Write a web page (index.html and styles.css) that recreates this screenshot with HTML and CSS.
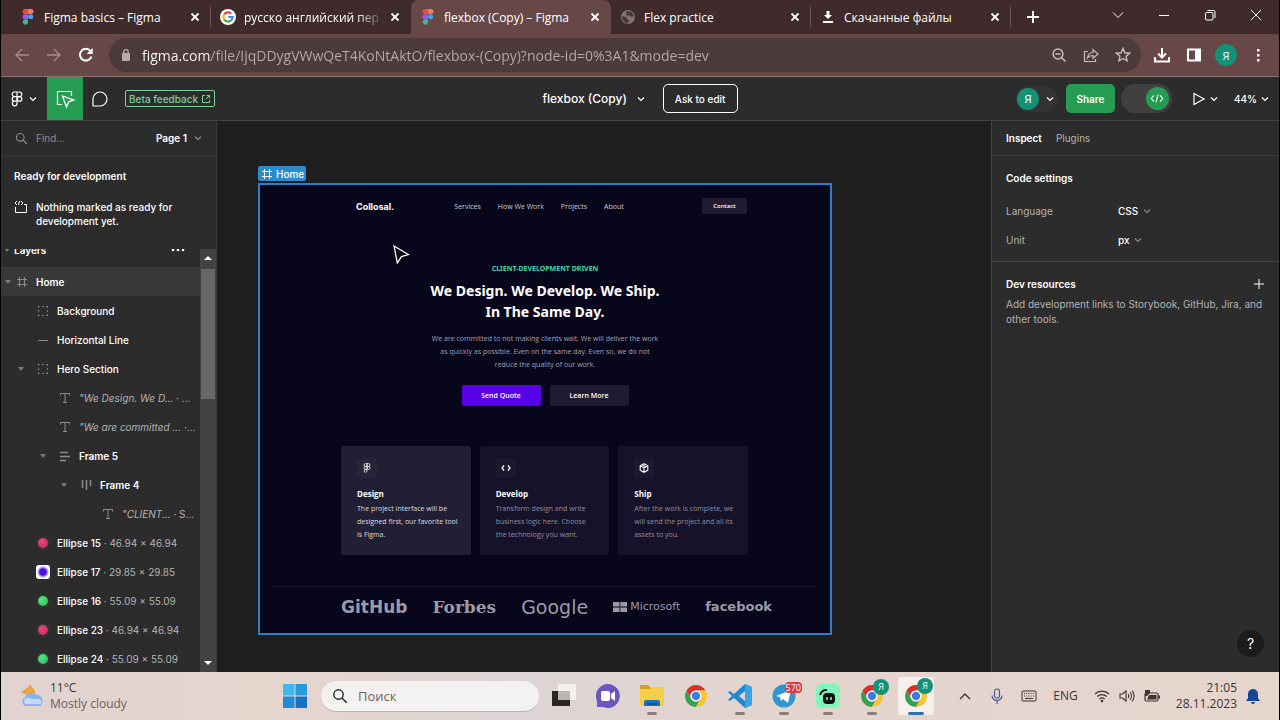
FILE: index.html
```html
<!DOCTYPE html>
<html lang="en">
<head>
    <meta charset="UTF-8">
    <meta name="viewport" content="width=device-width, initial-scale=1.0">
    <title>flexbox (Copy) – Figma</title>
    <link rel="stylesheet" href="styles.css">
</head>
<body>
    <svg class="sprite" aria-hidden="true">
        <symbol id="figma-color" viewBox="0 0 12 16">
            <path d="M3 0h3v5H3a2.5 2.5 0 0 1 0-5z" fill="#e8502e"/>
            <path d="M6 0h3a2.5 2.5 0 0 1 0 5H6z" fill="#f4776a"/>
            <path d="M3 5.2h3v5H3a2.5 2.5 0 0 1 0-5z" fill="#9a5be0"/>
            <circle cx="8.700" cy="7.700" r="2.500" fill="#3fa9e8"/>
            <path d="M3 10.500h3V13a2.600 2.600 0 1 1-3-2.500z" fill="#2fc48d"/>
        </symbol>
        <symbol id="figma-line" viewBox="0 0 12 16">
            <path d="M6 1H3.500a2.300 2.300 0 0 0 0 4.600H6zM6 1h2.500a2.300 2.300 0 0 1 0 4.600H6zM6 5.600H3.500a2.300 2.300 0 0 0 0 4.600H6zM3.500 10.200A2.300 2.300 0 1 0 6 12.500v-2.300z" fill="none" stroke="currentColor" stroke-width="1.200"/>
            <circle cx="8.500" cy="7.900" r="2.300" fill="none" stroke="currentColor" stroke-width="1.200"/>
        </symbol>
        <symbol id="close" viewBox="0 0 10 10"><path d="M1.500 1.500l7 7M8.500 1.500l-7 7" stroke="currentColor" stroke-width="1.800"/></symbol>
        <symbol id="chevron" viewBox="0 0 8 8"><path d="M1 2.500l3 3 3-3" fill="none" stroke="currentColor" stroke-width="1.200"/></symbol>
        <symbol id="caret" viewBox="0 0 6 6"><path d="M0 1h6L3 5z" fill="currentColor"/></symbol>
        <symbol id="download" viewBox="0 0 16 16"><path d="M6.500 2h3v4H12l-4 4-4-4h2.500zM3 12h10v2H3z" fill="currentColor"/></symbol>
        <symbol id="frame" viewBox="0 0 12 12"><path d="M3.500 1v10M8.500 1v10M1 3.500h10M1 8.500h10" stroke="currentColor"/></symbol>
        <symbol id="group" viewBox="0 0 12 12"><path d="M1 1.500h10M1 10.500h10M1.500 1v10M10.500 1v10" fill="none" stroke="currentColor" stroke-dasharray="1.600 2.600"/></symbol>
        <symbol id="line" viewBox="0 0 12 12"><path d="M1 6.500h10" stroke="currentColor"/></symbol>
        <symbol id="text" viewBox="0 0 12 12"><path d="M1.500 3.500v-2h9v2M6 1.500v9M4 10.500h4" fill="none" stroke="currentColor"/></symbol>
        <symbol id="align-left" viewBox="0 0 12 12"><path d="M1 2.500h8M1 6.500h10M1 10.500h6" stroke="currentColor" stroke-width="1.500"/></symbol>
        <symbol id="align-top" viewBox="0 0 12 12"><path d="M2.500 1v8M6.500 1v10M10.500 1v6" stroke="currentColor" stroke-width="1.500"/></symbol>
        <symbol id="search" viewBox="0 0 16 16"><circle cx="6.500" cy="6.500" r="4.700" fill="none" stroke="currentColor" stroke-width="1.400"/><path d="M10 10l4.700 4.700" stroke="currentColor" stroke-width="1.600"/></symbol>
        <symbol id="code" viewBox="0 0 16 12"><path d="M5 2L1.500 6 5 10M11 2l3.500 4L11 10" fill="none" stroke="currentColor" stroke-width="2"/></symbol>
        <symbol id="chrome" viewBox="0 0 24 24">
            <path d="M2.500 6.500A11 11 0 0 1 21.500 6.500H12A5.500 5.500 0 0 0 7.200 14.750z" fill="#d3322e"/>
            <path d="M2.500 6.500A11 11 0 0 0 12 23l4.800-8.250a5.500 5.500 0 0 1-9.600 0z" fill="#35a04d"/>
            <path d="M21.500 6.500A11 11 0 0 1 12 23l4.800-8.250A5.500 5.500 0 0 0 12 6.500z" fill="#f4c52c"/>
            <circle cx="12" cy="12" r="5.500" fill="#fff"/>
            <circle cx="12" cy="12" r="4.200" fill="#3c7de0"/>
        </symbol>
    </svg>

    <header class="browser">
        <div class="tabs">
            <div class="tab">
                <svg class="favicon"><use href="#figma-color"/></svg>
                <span class="tab-title">Figma basics – Figma</span>
                <button class="tab-close" aria-label="Close tab"><svg><use href="#close"/></svg></button>
            </div>
            <div class="tab">
                <svg class="favicon" viewBox="0 0 16 16">
                    <circle cx="8" cy="8" r="8" fill="#fff"/>
                    <g fill="none" stroke-width="2.200">
                        <path d="M4.200 5.500A4.600 4.600 0 0 1 11.200 4.600" stroke="#e04a3a"/>
                        <path d="M4.200 10.500a4.600 4.600 0 0 1 0-5" stroke="#f2b928"/>
                        <path d="M11 11.500a4.600 4.600 0 0 1-6.800-1" stroke="#34a853"/>
                        <path d="M8.200 8h4.400a4.600 4.600 0 0 1-1.600 3.500" stroke="#4285f4"/>
                    </g>
                </svg>
                <span class="tab-title fade">русско английский пер</span>
                <button class="tab-close" aria-label="Close tab"><svg><use href="#close"/></svg></button>
            </div>
            <div class="tab active">
                <svg class="favicon"><use href="#figma-color"/></svg>
                <span class="tab-title">flexbox (Copy) – Figma</span>
                <button class="tab-close" aria-label="Close tab"><svg><use href="#close"/></svg></button>
            </div>
            <div class="tab divided">
                <svg class="favicon" viewBox="0 0 16 16"><circle cx="8" cy="8" r="7" fill="#7c7474"/><path d="M2 7l4 1 1 2 2 1-1 3.500A7 7 0 0 1 2 7zM7 2l5 1 2 4-3 1-2-2-2 1-1-2z" fill="#4a3838"/></svg>
                <span class="tab-title">Flex practice</span>
                <button class="tab-close" aria-label="Close tab"><svg><use href="#close"/></svg></button>
            </div>
            <div class="tab divided">
                <svg class="favicon"><use href="#download"/></svg>
                <span class="tab-title">Скачанные файлы</span>
                <button class="tab-close" aria-label="Close tab"><svg><use href="#close"/></svg></button>
            </div>
            <button class="new-tab" aria-label="New tab"><svg viewBox="0 0 14 14"><path d="M7 1v12M1 7h12" stroke="currentColor" stroke-width="2"/></svg></button>
            <div class="window-buttons">
                <button aria-label="Search tabs"><svg viewBox="0 0 12 12"><path d="M1 3.500l5 5 5-5" fill="none" stroke="currentColor"/></svg></button>
                <button aria-label="Minimize"><svg viewBox="0 0 12 12"><path d="M1 6.500h10" stroke="currentColor"/></svg></button>
                <button aria-label="Restore"><svg viewBox="0 0 12 12"><path d="M3.500 1.500h6a1.500 1.500 0 0 1 1.500 1.500v6" fill="none" stroke="currentColor"/><rect x="1.500" y="3.500" width="7.500" height="7.500" rx="1" fill="none" stroke="currentColor"/></svg></button>
                <button aria-label="Close window"><svg viewBox="0 0 12 12"><path d="M1 1l10 10M11 1L1 11" stroke="currentColor"/></svg></button>
            </div>
        </div>
        <div class="address-bar">
            <button class="nav-btn dim" aria-label="Back"><svg viewBox="0 0 16 16"><path d="M15 8H2M8 2L2 8l6 6" fill="none" stroke="currentColor" stroke-width="1.400"/></svg></button>
            <button class="nav-btn dim" aria-label="Forward"><svg viewBox="0 0 16 16"><path d="M1 8h13M8 2l6 6-6 6" fill="none" stroke="currentColor" stroke-width="1.400"/></svg></button>
            <button class="nav-btn" aria-label="Reload"><svg viewBox="0 0 16 16"><path d="M13.500 9.500A5.900 5.900 0 1 1 12.500 4" fill="none" stroke="currentColor" stroke-width="2"/><path d="M14.700 1v6h-6z" fill="currentColor"/></svg></button>
            <div class="omnibox">
                <svg class="lock" viewBox="0 0 10 14"><rect x="1" y="5" width="8" height="8" rx="1" fill="currentColor"/><path d="M2.800 6V3.800a2.200 2.200 0 0 1 4.400 0V6" fill="none" stroke="currentColor" stroke-width="1.300"/></svg>
                <input class="url" type="text" aria-label="Address" value="figma.com/file/IjqDDygVWwQeT4KoNtAktO/flexbox-(Copy)?node-id=0%3A1&amp;mode=dev">
                <button class="nav-btn soft" aria-label="Zoom"><svg viewBox="0 0 16 16"><circle cx="7" cy="7" r="4.900" fill="none" stroke="currentColor" stroke-width="1.500"/><path d="M10.500 10.500l4 4M4.500 7h5" stroke="currentColor" stroke-width="1.500"/></svg></button>
                <button class="nav-btn soft" aria-label="Share page"><svg viewBox="0 0 16 16"><path d="M5 4.500H1.500v10h11V12M4.500 11c.5-4 2.500-5.500 5.500-5.500V2.500L15 7l-5 4.200V8.500c-2.500 0-4 .5-5.500 2.500z" fill="none" stroke="currentColor" stroke-width="1.200"/></svg></button>
                <button class="nav-btn soft" aria-label="Bookmark"><svg viewBox="0 0 16 16"><path d="M8 1.500l1.900 4.300 4.700.4-3.500 3.100 1 4.600L8 11.500l-4.100 2.400 1-4.600L1.400 6.200l4.700-.4z" fill="none" stroke="currentColor" stroke-width="1.400"/></svg></button>
            </div>
            <button class="nav-btn" aria-label="Downloads"><svg viewBox="0 0 16 16"><path d="M8 1v9M4 6.500l4 4 4-4M1 10v4.500h14V10" fill="none" stroke="currentColor" stroke-width="2"/></svg></button>
            <button class="nav-btn" aria-label="Side panel"><svg viewBox="0 0 16 16"><path d="M1 1.500h14v13H1zM3 3.500v9h6v-9z" fill="currentColor" fill-rule="evenodd"/></svg></button>
            <button class="nav-btn" aria-label="Profile"><span class="avatar">Я</span></button>
            <button class="nav-btn" aria-label="Menu"><svg viewBox="0 0 16 16"><path d="M7 2h2.500v2.500H7zM7 7h2.500v2.500H7zM7 12h2.500v2.500H7z" fill="currentColor"/></svg></button>
        </div>
    </header>

    <div class="toolbar">
        <div class="toolbar-left">
            <button class="tool main-menu" aria-label="Main menu"><svg class="logo"><use href="#figma-line"/></svg><svg class="chevron"><use href="#chevron"/></svg></button>
            <button class="tool inspect-tool" aria-label="Inspect"><svg viewBox="0 0 20 20"><path d="M7 15.500H2.500v-13h14V7" fill="none" stroke="currentColor" stroke-width="1.200"/><path d="M7.500 7l11 4-4.800 1.800L11.500 18z" fill="none" stroke="currentColor" stroke-width="1.300"/></svg></button>
            <button class="tool comment-tool" aria-label="Comment"><svg viewBox="0 0 18 18"><path d="M2 16V9a7 7 0 1 1 7 7z" fill="none" stroke="currentColor" stroke-width="1.200"/></svg></button>
            <a class="beta" href="#">Beta feedback <svg viewBox="0 0 10 10"><path d="M4 1.500H1.500v7h7V6M5.500 1.500h3v3M8.500 1.500L4.500 5.500" fill="none" stroke="currentColor"/></svg></a>
        </div>
        <div class="toolbar-title">
            <button class="file-name">flexbox (Copy) <svg class="chevron"><use href="#chevron"/></svg></button>
            <button class="ask">Ask to edit</button>
        </div>
        <div class="toolbar-right">
            <button class="user"><span class="avatar">Я</span><svg class="chevron"><use href="#chevron"/></svg></button>
            <button class="share">Share</button>
            <label class="dev-mode">
                <input type="checkbox" aria-label="Dev Mode" checked>
                <span class="knob"><svg viewBox="0 0 16 12"><path d="M4.500 2.500L1.500 6l3 3.500M11.500 2.500l3 3.500-3 3.500M9.300 1.500l-2.600 9" fill="none" stroke="currentColor" stroke-width="1.200"/></svg></span>
            </label>
            <button class="play" aria-label="Present"><svg viewBox="0 0 14 14"><path d="M2 1.500L12 7 2 12.500z" fill="none" stroke="currentColor" stroke-width="1.200"/></svg><svg class="chevron"><use href="#chevron"/></svg></button>
            <button class="zoom">44% <svg class="chevron"><use href="#chevron"/></svg></button>
        </div>
    </div>

    <main class="workspace">
        <aside class="layers-panel">
            <div class="find-row">
                <svg><use href="#search"/></svg>
                <input type="search" aria-label="Find" placeholder="Find...">
                <label class="picker">
                    <select class="strong" aria-label="Page"><option>Page 1</option></select>
                    <svg class="chevron"><use href="#chevron"/></svg>
                </label>
            </div>
            <section class="ready">
                <h2>Ready for development</h2>
                <div class="ready-note">
                    <svg viewBox="0 0 14 14"><path d="M1.500 7v5.500h11v-8H10M3 1L1 3l2 2M7 1l2 2-2 2M5.500 1l-1 4" fill="none" stroke="currentColor"/></svg>
                    <p>Nothing marked as ready for development yet.</p>
                </div>
            </section>
            <div class="layers">
                <div class="layers-view">
                    <div class="layers-head">
                        <svg class="caret"><use href="#caret"/></svg>
                        <h2>Layers</h2>
                        <button aria-label="More"><svg viewBox="0 0 14 4"><circle cx="2" cy="2" r="1.300"/><circle cx="7" cy="2" r="1.300"/><circle cx="12" cy="2" r="1.300"/></svg></button>
                    </div>
                    <ul class="layer-list">
                        <li class="layer level-0 selected bold"><span class="toggle"><svg class="caret"><use href="#caret"/></svg></span><svg class="kind"><use href="#frame"/></svg><span class="name">Home</span></li>
                        <li class="layer level-1"><span class="toggle"></span><svg class="kind"><use href="#group"/></svg><span class="name">Background</span></li>
                        <li class="layer level-1"><span class="toggle"></span><svg class="kind"><use href="#line"/></svg><span class="name">Horizontal Line</span></li>
                        <li class="layer level-1"><span class="toggle"><svg class="caret"><use href="#caret"/></svg></span><svg class="kind"><use href="#group"/></svg><span class="name">Hero Section</span></li>
                        <li class="layer level-2 quiet"><span class="toggle"></span><svg class="kind"><use href="#text"/></svg><span class="name"><i>"We Design. We D...</i> · ...</span></li>
                        <li class="layer level-2 quiet"><span class="toggle"></span><svg class="kind"><use href="#text"/></svg><span class="name"><i>"We are committed ...</i> ·...</span></li>
                        <li class="layer level-2 bold"><span class="toggle"><svg class="caret"><use href="#caret"/></svg></span><svg class="kind"><use href="#align-left"/></svg><span class="name">Frame 5</span></li>
                        <li class="layer level-3 bold"><span class="toggle"><svg class="caret"><use href="#caret"/></svg></span><svg class="kind"><use href="#align-top"/></svg><span class="name">Frame 4</span></li>
                        <li class="layer level-4 quiet"><span class="toggle"></span><svg class="kind"><use href="#text"/></svg><span class="name"><i>"CLIENT...</i> · S...</span></li>
                        <li class="layer level-1"><span class="toggle"></span><span class="dot pink"></span><span class="name">Ellipse 15 <small>· 46.94 × 46.94</small></span></li>
                        <li class="layer level-1"><span class="toggle"></span><span class="dot violet"></span><span class="name">Ellipse 17 <small>· 29.85 × 29.85</small></span></li>
                        <li class="layer level-1"><span class="toggle"></span><span class="dot green"></span><span class="name">Ellipse 16 <small>· 55.09 × 55.09</small></span></li>
                        <li class="layer level-1"><span class="toggle"></span><span class="dot pink"></span><span class="name">Ellipse 23 <small>· 46.94 × 46.94</small></span></li>
                        <li class="layer level-1"><span class="toggle"></span><span class="dot green"></span><span class="name">Ellipse 24 <small>· 55.09 × 55.09</small></span></li>
                    </ul>
                </div>
                <div class="scrollbar">
                    <svg viewBox="0 0 8 6"><path d="M4 1l4 4H0z" fill="#fff"/></svg>
                    <div class="track"><div class="thumb"></div></div>
                    <svg viewBox="0 0 8 6"><path d="M0 1h8L4 5z" fill="#fff"/></svg>
                </div>
            </div>
        </aside>

        <section class="canvas">
            <div class="frame-label"><svg><use href="#frame"/></svg>Home</div>
            <article class="design">
                <nav class="site-nav">
                    <a class="brand" href="#">Collosal.</a>
                    <div class="site-links">
                        <a href="#">Services</a>
                        <a href="#">How We Work</a>
                        <a href="#">Projects</a>
                        <a href="#">About</a>
                    </div>
                    <button class="contact">Contact</button>
                </nav>
                <div class="hero">
                    <p class="eyebrow">CLIENT-DEVELOPMENT DRIVEN</p>
                    <h1>We Design. We Develop. We Ship.<br>In The Same Day.</h1>
                    <p class="lead">We are committed to not making clients wait. We will deliver the work<br>as quickly as possible. Even on the same day. Even so, we do not<br>reduce the quality of our work.</p>
                    <div class="hero-buttons">
                        <button class="primary">Send Quote</button>
                        <button>Learn More</button>
                    </div>
                </div>
                <div class="cards">
                    <div class="card featured">
                        <span class="card-icon"><svg><use href="#figma-line"/></svg></span>
                        <h3>Design</h3>
                        <p>The project interface will be<br>designed first, our favorite tool<br>is Figma.</p>
                    </div>
                    <div class="card">
                        <span class="card-icon"><svg><use href="#code"/></svg></span>
                        <h3>Develop</h3>
                        <p>Transform design and write<br>business logic here. Choose<br>the technology you want.</p>
                    </div>
                    <div class="card">
                        <span class="card-icon"><svg viewBox="0 0 14 14"><path d="M7 1l5.300 3v6L7 13l-5.300-3V4zM1.700 4L7 7l5.300-3M7 7v6M4.300 2.500l5.400 3" fill="none" stroke="currentColor" stroke-width="1.500"/></svg></span>
                        <h3>Ship</h3>
                        <p>After the work is complete, we<br>will send the project and all its<br>assets to you.</p>
                    </div>
                </div>
                <div class="partners">
                    <span class="github">GitHub</span>
                    <span class="forbes">Forbes</span>
                    <span class="google">Google</span>
                    <span class="microsoft"><svg viewBox="0 0 14 10"><path d="M0 0h6.500v4.600H0zM7.300 0H14v4.600H7.300zM0 5.400h6.500V10H0zM7.300 5.400H14V10H7.300z" fill="currentColor"/></svg>Microsoft</span>
                    <span class="facebook">facebook</span>
                </div>
                <svg class="cursor" viewBox="0 0 16 18"><path d="M1 1l13.500 8-6.500 2-4 6z" fill="#0a0a14" stroke="#fff" stroke-width="1.200"/></svg>
            </article>
        </section>

        <aside class="inspect-panel">
            <div class="inspect-tabs">
                <button class="current">Inspect</button>
                <button>Plugins</button>
            </div>
            <section class="settings">
                <h2>Code settings</h2>
                <div class="setting">
                    <label for="language">Language</label>
                    <span class="picker"><select id="language"><option>CSS</option></select><svg class="chevron"><use href="#chevron"/></svg></span>
                </div>
                <div class="setting">
                    <label for="unit">Unit</label>
                    <span class="picker"><select id="unit"><option>px</option></select><svg class="chevron"><use href="#chevron"/></svg></span>
                </div>
            </section>
            <section class="resources">
                <div class="resources-head">
                    <h2>Dev resources</h2>
                    <button aria-label="Add"><svg viewBox="0 0 12 12"><path d="M6 1v10M1 6h10" stroke="currentColor"/></svg></button>
                </div>
                <p>Add development links to Storybook, GitHub, Jira, and other tools.</p>
            </section>
            <button class="help" aria-label="Help">?</button>
        </aside>
    </main>

    <footer class="taskbar">
        <div class="weather">
            <svg viewBox="0 0 26 24">
                <circle cx="11" cy="8" r="5" fill="#f0a63c"/><path d="M11 0l2 4H9zM2 8l5-3v5z" fill="#e69a3e"/>
                <path d="M6 22a5 5 0 0 1 0-9 7 7 0 0 1 12-2 6 6 0 0 1 3 11z" fill="#8fb2ea"/>
                <path d="M6 20a4 4 0 0 1 1-6c4-1 6 2 10 1s6 2 5 5z" fill="#c4dafa"/>
            </svg>
            <div><p>11°C</p><p class="muted">Mostly cloudy</p></div>
        </div>
        <div class="apps">
            <button class="app" aria-label="Start"><svg viewBox="0 0 24 24"><path d="M0 0h11.500v11.500H0z" fill="#3fb8ee"/><path d="M12.500 0H24v11.500H12.500z" fill="#2499dc"/><path d="M0 12.500h11.500V24H0z" fill="#1f8ad6"/><path d="M12.500 12.500H24V24H12.500z" fill="#1872c4"/></svg></button>
            <label class="task-search"><svg><use href="#search"/></svg><input type="search" aria-label="Поиск" placeholder="Поиск"></label>
            <button class="app" aria-label="Task view"><svg viewBox="0 0 24 24"><path d="M0 7h18v15H0z" fill="#2a2524"/><path d="M6 0h18v16H6z" fill="#f4f1ef"/><path d="M6 7h12v9H6z" fill="#b9b5b3"/></svg></button>
            <button class="app" aria-label="Chat"><svg viewBox="0 0 24 24"><path d="M12 0a12 12 0 1 1-5 23H1V17A12 12 0 0 1 12 0z" fill="#6a56bd"/><rect x="5" y="7" width="9" height="10" rx="2" fill="#fff"/><path d="M15 10l4-3v10l-4-3z" fill="#fff"/></svg></button>
            <button class="app running" aria-label="Explorer"><svg viewBox="0 0 24 24"><path d="M0 1h8l3 3h13v18H0z" fill="#d99e1f"/><path d="M0 5h10l3-2h11v19H0z" fill="#f5cd46"/><path d="M4 22v-4q0-2 2-2h12q2 0 2 2v4z" fill="#1b73bd"/><path d="M7 19h10v2H7z" fill="#124f8f"/></svg></button>
            <button class="app" aria-label="Chrome"><svg><use href="#chrome"/></svg></button>
            <button class="app running" aria-label="Visual Studio Code"><svg viewBox="0 0 24 24"><path d="M17 0l7 3v18l-7 3-11-10-4 3-2-1.500 4-3.500-4-3.500L2 7l4 3zM17 7l-6 5 6 5z" fill="#2389ce" fill-rule="evenodd"/><path d="M17 0l7 3v18l-7 3z" fill="#36a5e8"/></svg></button>
            <button class="app running" aria-label="Telegram"><svg viewBox="0 0 24 24"><circle cx="12" cy="12" r="11.500" fill="#3096cc"/><path d="M4 12l15-6-3 13-5-4-2 2-1-4z" fill="#fff"/></svg><span class="count">570</span></button>
            <button class="app running" aria-label="Recorder"><svg viewBox="0 0 24 24"><rect width="24" height="24" rx="5" fill="#82f5bd"/><path d="M4 11a7 7 0 0 1 7-5" fill="none" stroke="#111" stroke-width="1.800"/><rect x="7" y="9" width="12" height="11" rx="4" fill="#111"/><path d="M11 13v3M15 13v3" stroke="#82f5bd" stroke-width="1.600"/></svg></button>
            <button class="app running" aria-label="Chrome profile"><svg><use href="#chrome"/></svg><span class="profile">Я</span></button>
            <button class="app running current" aria-label="Chrome profile, active"><svg><use href="#chrome"/></svg><span class="profile">Я</span></button>
        </div>
        <div class="tray">
            <svg viewBox="0 0 16 16"><path d="M3 11l5-5 5 5" fill="none" stroke="currentColor" stroke-width="1.400"/></svg>
            <svg class="mic" viewBox="0 0 16 16"><rect x="5.500" y="1" width="5" height="9" rx="2.500" fill="none" stroke="currentColor" stroke-width="1.200"/><path d="M3 7.500a5 5 0 0 0 10 0M8 12.500V16" fill="none" stroke="currentColor" stroke-width="1.200"/></svg>
            <svg viewBox="0 0 16 16"><rect x="1" y="3" width="14" height="10" rx="1" fill="none" stroke="currentColor"/><path d="M3 5.500h10M3 8h10" stroke="currentColor" stroke-dasharray="1 1.200"/><path d="M4 10.500h8" stroke="currentColor"/></svg>
            <span class="lang">ENG</span>
            <div class="status">
                <svg viewBox="0 0 16 16"><path d="M1 6a10 10 0 0 1 14 0M3.200 8.500a7 7 0 0 1 9.600 0M5.400 11a4 4 0 0 1 5.200 0" fill="none" stroke="currentColor" stroke-width="1.100"/><circle cx="8" cy="13" r="1.300"/></svg>
                <svg viewBox="0 0 16 16"><path d="M1 6h2.500L7 3v10L3.500 10H1zM9 6a3 3 0 0 1 0 4M11 4.300a5.500 5.500 0 0 1 0 7.400M13 2.700a8 8 0 0 1 0 10.600" fill="none" stroke="currentColor" stroke-width="1.100"/></svg>
                <svg viewBox="0 0 16 16"><rect x="1" y="5" width="13" height="8" rx="1.500" fill="none" stroke="currentColor" stroke-width="1.200"/><path d="M5 7h7.500v4.500H3zM14.500 7.500H16v3h-1.500zM1 2h5v3L3 8H1z"/></svg>
            </div>
            <div class="clock"><p>21:05</p><p>28.11.2023</p></div>
            <svg class="bell" viewBox="0 0 16 16"><path d="M8 1a5 5 0 0 1 5 5v4l2 3H1l2-3V6a5 5 0 0 1 5-5zM6 14h4a2 2 0 0 1-4 0z"/></svg>
        </div>
    </footer>
</body>
</html>
```
FILE: styles.css
```css
:root {
    --chrome-dark: #3f2b2b;
    --chrome-light: #674846;
    --omnibox: #4d3a3a;
    --panel: #2c2c2c;
    --canvas: #1e1e1e;
    --border: #444;
    --green: #259c51;
    --teal: #149278;
    --select: #2f7fc0;
    --muted: #b3b3b3;
    --page: #08061b;
    --ui-font: "Open Sans", "Noto Sans", sans-serif;
}
* {
    box-sizing: border-box;
}
body {
    margin: 0;
    padding: 0 1px;
    height: 100vh;
    display: flex;
    flex-direction: column;
    overflow: hidden;
    background: #000;
    color: #fff;
    font-family: Inter, sans-serif;
    font-size: 10px;
}
h1, h2, h3, p, ul {
    margin: 0;
    padding: 0;
}
h2 {
    font-size: 10px;
    line-height: 14px;
    font-weight: 600;
}
a {
    color: inherit;
    text-decoration: none;
}
button, input, select {
    margin: 0;
    padding: 0;
    border: none;
    background: none;
    color: inherit;
    font: inherit;
    outline: none;
}
button {
    display: flex;
    align-items: center;
    justify-content: center;
}
select {
    appearance: none;
}
svg {
    display: block;
    flex: none;
}
.sprite {
    position: absolute;
    width: 0;
    height: 0;
}
.chevron {
    width: 8px;
    height: 8px;
}
.avatar {
    display: flex;
    align-items: center;
    justify-content: center;
    width: 22px;
    height: 22px;
    border-radius: 50%;
    background: var(--teal);
    font-size: 11px;
}

/* browser */
.browser {
    font-family: var(--ui-font);
}
.tabs {
    display: flex;
    height: 34px;
    padding-left: 10px;
    background: var(--chrome-dark);
}
.tab {
    display: flex;
    align-items: center;
    flex: 0 1 200px;
    min-width: 0;
    padding: 0 9px;
    font-size: 12px;
    border-right: 1px solid transparent;
}
.tab:first-child, .tab.divided {
    border-image: linear-gradient(transparent 8px, #6d5656 8px, #6d5656 27px, transparent 27px) 1;
}
.tab.active {
    background: var(--chrome-light);
    border-radius: 8px 8px 0 0;
}
.favicon {
    width: 16px;
    height: 16px;
}
.tab-title {
    flex: 1;
    margin: 0 4px 0 8px;
    overflow: hidden;
    white-space: nowrap;
}
.tab-title.fade {
    mask-image: linear-gradient(to right, #000 80%, transparent);
}
.tab-close {
    width: 12px;
    height: 12px;
}
.tab-close svg {
    width: 10px;
    height: 10px;
}
.new-tab {
    width: 44px;
}
.new-tab svg {
    width: 14px;
    height: 14px;
}
.window-buttons {
    display: flex;
    margin-left: auto;
}
.window-buttons button {
    width: 46px;
    height: 29px;
}
.window-buttons svg {
    width: 12px;
    height: 12px;
}
.address-bar {
    display: flex;
    align-items: center;
    height: 43px;
    padding: 0 5px;
    background: var(--chrome-light);
    border-bottom: 1px solid #8a7170;
}
.nav-btn {
    width: 32px;
    height: 32px;
}
.nav-btn svg {
    width: 16px;
    height: 16px;
}
.dim {
    color: #a58d8c;
}
.soft {
    color: #cbbcbc;
}
.omnibox {
    display: flex;
    align-items: center;
    flex: 1;
    height: 34px;
    margin: 0 5px 0 7px;
    padding: 0 2px 0 12px;
    border-radius: 17px;
    background: var(--omnibox);
}
.lock {
    width: 10px;
    height: 14px;
    color: #b9abab;
}
/* the domain is brighter than the path */
.url {
    flex: 1;
    min-width: 0;
    margin-left: 11px;
    font-size: 14px;
    color: transparent;
    background: linear-gradient(to right, #fff 69px, #b9abab 69px);
    background-clip: text;
}

/* figma toolbar */
.toolbar {
    display: grid;
    grid-template-columns: 1fr auto 1fr;
    align-items: center;
    height: 44px;
    background: var(--panel);
    border-bottom: 1px solid var(--border);
}
.toolbar-left, .toolbar-title, .toolbar-right {
    display: flex;
    align-items: center;
}
.tool {
    height: 43px;
    gap: 6px;
}
.main-menu {
    width: 46px;
}
.logo {
    width: 12px;
    height: 16px;
}
.inspect-tool {
    width: 36px;
    background: var(--green);
}
.inspect-tool svg {
    width: 20px;
    height: 20px;
}
.comment-tool {
    width: 34px;
}
.comment-tool svg {
    width: 18px;
    height: 18px;
}
.beta {
    display: flex;
    align-items: center;
    gap: 3px;
    height: 17px;
    margin-left: 8px;
    padding: 0 3px;
    border: 1px solid #79d297;
    border-radius: 2px;
    color: #79d297;
    font-weight: 500;
}
.beta svg {
    width: 10px;
    height: 10px;
}
.toolbar-title {
    gap: 18px;
}
.file-name {
    gap: 10px;
    font-size: 12px;
    font-weight: 500;
}
.ask, .share {
    height: 29px;
    border-radius: 5px;
    font-weight: 500;
}
.ask {
    padding: 0 11px;
    border: 1px solid #fff;
}
.toolbar-right {
    justify-content: flex-end;
    padding-right: 10px;
}
.user {
    gap: 7px;
    margin-right: 8px;
    padding: 2px 4px 2px 2px;
    border-radius: 13px;
    background: #333;
}
.share {
    width: 49px;
    background: var(--green);
    font-weight: 600;
}
.dev-mode {
    display: flex;
    justify-content: flex-end;
    width: 51px;
    height: 29px;
    margin: 0 20px 0 6px;
    padding: 3px;
    border-radius: 15px;
    background: #404040;
}
.dev-mode input {
    width: 0;
    appearance: none;
}
.knob {
    display: flex;
    align-items: center;
    justify-content: center;
    width: 23px;
    border-radius: 50%;
    background: var(--green);
}
.knob svg {
    width: 14px;
    height: 11px;
}
.play {
    gap: 4px;
    margin-right: 16px;
}
.play svg:first-child {
    width: 14px;
    height: 14px;
}
.zoom {
    gap: 4px;
    font-weight: 500;
}

/* workspace */
.workspace {
    display: flex;
    flex: 1;
    min-height: 0;
    background: var(--canvas);
}
.layers-panel {
    display: flex;
    flex-direction: column;
    flex: 0 0 216px;
    min-width: 0;
    background: var(--panel);
    border-right: 1px solid #3a3a3a;
}
.find-row {
    display: flex;
    align-items: center;
    height: 35px;
    padding: 0 14px;
    border-bottom: 1px solid #363636;
}
.find-row > svg {
    width: 13px;
    height: 13px;
    color: #8c8c8c;
}
.find-row input {
    flex: 1;
    min-width: 0;
    margin-left: 8px;
}
.find-row input::placeholder {
    color: #8c8c8c;
}
.picker {
    display: flex;
    align-items: center;
    gap: 6px;
}
.picker .chevron {
    color: #8c8c8c;
}
.strong {
    font-weight: 600;
}
.ready {
    height: 93px;
    padding: 13px 13px 0;
}
.ready-note {
    display: flex;
    gap: 8px;
    margin-top: 17px;
    line-height: 14px;
    font-weight: 500;
}
.ready-note svg {
    width: 14px;
    height: 14px;
}
.ready-note p {
    max-width: 150px;
}
.layers {
    display: flex;
    flex: 1;
    min-height: 0;
}
.layers-view {
    flex: 1;
    min-width: 0;
    overflow: hidden;
}
.layers-head {
    display: flex;
    align-items: center;
    gap: 4px;
    height: 34px;
    margin-top: -16px;
    padding: 0 14px 0 3px;
}
.layers-head button {
    margin-left: auto;
}
.layers-head button svg {
    width: 16px;
    height: 4px;
    fill: #fff;
}
.caret {
    width: 6px;
    height: 6px;
    color: #7a7a7a;
}
.layer-list {
    list-style: none;
}
.layer {
    display: flex;
    align-items: center;
    height: 29px;
    font-weight: 500;
    white-space: nowrap;
}
.selected {
    background: #383838;
}
.bold {
    font-weight: 600;
}
.quiet {
    color: var(--muted);
    font-weight: 400;
}
.toggle {
    width: 21px;
    padding-left: 4px;
}
.level-0 .toggle {
    width: 13px;
}
.level-1 {
    padding-left: 13px;
}
.level-2 {
    padding-left: 35px;
}
.level-3 {
    padding-left: 56px;
}
.level-4 {
    padding-left: 78px;
}
.kind, .dot {
    width: 12px;
    height: 12px;
    margin: 0 8px 0 2px;
}
.kind {
    color: #8c8c8c;
}
.dot {
    width: 14px;
    height: 14px;
    margin: 0 7px 0 1px;
    border: 2px solid #333;
    border-radius: 50%;
}
.pink {
    background: radial-gradient(circle at 35% 35%, #e8487c, #c02858);
}
.green {
    background: radial-gradient(circle at 35% 35%, #55e684, #28b858);
}
.violet {
    border: none;
    border-radius: 3px;
    background: radial-gradient(circle, #4a0ce0 3px, #fff 6px);
}
.name small {
    color: var(--muted);
    font-size: 10px;
    font-weight: 400;
}
.scrollbar {
    display: flex;
    flex-direction: column;
    align-items: center;
    gap: 8px;
    width: 16px;
    padding: 6px 1px;
    background: #424242;
}
.scrollbar svg {
    width: 8px;
    height: 6px;
}
.track {
    flex: 1;
    width: 100%;
}
.thumb {
    height: 34%;
    background: #686868;
}

/* canvas */
.canvas {
    flex: 1;
    min-width: 0;
    padding: 45px 32px 0 41px;
}
.frame-label {
    display: flex;
    align-items: center;
    gap: 3px;
    width: 48px;
    height: 15px;
    margin-bottom: 2px;
    padding-left: 3px;
    border-radius: 2px;
    background: #2b8bcd;
    font-weight: 500;
}
.frame-label svg {
    width: 12px;
    height: 12px;
}
.design {
    position: relative;
    max-width: 574px;
    padding: 13px 12px 11px;
    border: 2px solid var(--select);
    background: var(--page);
    font-family: "Open Sans", "Noto Sans", sans-serif;
    font-size: 7px;
}
.design button {
    border-radius: 2px;
    background: #1f1c31;
    font-weight: 600;
}
.site-nav {
    display: flex;
    align-items: center;
    margin: 0 71px 0 84px;
}
.brand {
    font-family: Inter, sans-serif;
    font-size: 9px;
    font-weight: 700;
}
.site-links {
    display: flex;
    gap: 17px;
    margin-left: 60px;
    color: #c9c7d2;
}
.site-nav .contact {
    width: 45px;
    height: 16px;
    margin-left: auto;
    font-size: 6px;
}
.hero {
    margin-top: 49px;
    text-align: center;
}
.eyebrow {
    color: #41d9a6;
    font-family: "Noto Sans", sans-serif;
    font-weight: 700;
    line-height: 12px;
}
.hero h1 {
    margin-top: 5px;
    font-family: "Noto Sans", sans-serif;
    font-size: 14px;
    line-height: 21px;
}
.lead {
    margin-top: 10px;
    color: #a2a0ae;
    line-height: 13px;
}
.hero-buttons {
    display: flex;
    justify-content: center;
    gap: 9px;
    margin-top: 14px;
}
.hero-buttons button {
    width: 79px;
    height: 21px;
}
.hero-buttons .primary {
    background: #5800e8;
}
.cards {
    display: grid;
    grid-template-columns: repeat(3, minmax(0, 1fr));
    gap: 9px;
    margin: 40px 70px 0 69px;
}
.card {
    padding: 12px 16px 14px;
    border-radius: 2px;
    background: #151229;
    color: #918fa0;
    line-height: 13px;
    white-space: nowrap;
}
.featured {
    background: #211f33;
    color: #dddce4;
}
.card-icon {
    display: flex;
    align-items: center;
    justify-content: center;
    width: 20px;
    height: 20px;
    border-radius: 2px;
    background: rgba(255, 255, 255, 0.03);
    color: #fff;
}
.card-icon svg {
    width: 10px;
    height: 10px;
}
.card h3 {
    margin-top: 9px;
    color: #fff;
    font-size: 8px;
    line-height: 13px;
}
.card p {
    margin-top: 2px;
}
.partners {
    display: flex;
    align-items: center;
    justify-content: space-between;
    height: 36px;
    margin-top: 31px;
    padding: 4px 46px 0 69px;
    border-top: 1px solid #17142b;
    color: #9c9aa9;
    white-space: nowrap;
}
.github {
    font: 700 17px "DejaVu Sans", sans-serif;
}
.forbes {
    font: 700 17px "DejaVu Serif", serif;
}
.google {
    font: 400 19px "DejaVu Sans", sans-serif;
}
.microsoft {
    display: flex;
    align-items: center;
    gap: 3px;
    font: 400 11px "DejaVu Sans", sans-serif;
}
.microsoft svg {
    width: 14px;
    height: 10px;
}
.facebook {
    font: 700 13px "DejaVu Sans", sans-serif;
}
.cursor {
    position: absolute;
    left: 133px;
    top: 60px;
    width: 17px;
    height: 19px;
}

/* inspect panel */
.inspect-panel {
    position: relative;
    flex: 0 0 288px;
    background: var(--panel);
    border-left: 1px solid var(--border);
}
.inspect-tabs {
    display: flex;
    gap: 14px;
    height: 35px;
    padding: 0 14px;
    border-bottom: 1px solid #3a3a3a;
    color: var(--muted);
}
.inspect-tabs .current {
    color: #fff;
    font-weight: 600;
}
.settings, .resources {
    padding: 15px 14px;
}
.settings {
    height: 106px;
    border-bottom: 1px solid var(--border);
}
.settings h2 {
    margin-bottom: 11px;
}
.setting {
    display: grid;
    grid-template-columns: 112px 1fr;
    align-items: center;
    height: 29px;
}
.setting label {
    color: var(--muted);
}
.setting .picker {
    gap: 4px;
    font-weight: 500;
}
.resources-head {
    display: flex;
    justify-content: space-between;
    align-items: center;
}
.resources-head svg {
    width: 12px;
    height: 12px;
}
.inspect-panel .resources-head button {
    margin-right: 6px;
}
.resources {
    padding-right: 8px;
}
.resources p {
    margin-top: 6px;
    color: var(--muted);
    line-height: 15px;
}
.help {
    position: absolute;
    right: 15px;
    bottom: 15px;
    width: 27px;
    height: 27px;
    border-radius: 50%;
    background: #1c1c1c;
    font-size: 14px;
}

/* taskbar */
.taskbar {
    display: flex;
    align-items: center;
    height: 48px;
    padding-right: 18px;
    background: linear-gradient(to right, #e0d3d0, #e6d5cd 20%, #dcd4d5 40%, #e4d4cf 60%, #e6d5cc);
    color: #3a3433;
    font-family: var(--ui-font);
    font-size: 12px;
    line-height: 16px;
}
.weather {
    display: flex;
    align-items: center;
    gap: 5px;
    flex: 0 0 272px;
    padding-left: 18px;
}
.weather svg {
    width: 26px;
    height: 24px;
}
.muted {
    color: #6c615f;
}
.apps {
    display: flex;
    align-items: center;
}
.app {
    position: relative;
    width: 44px;
    height: 48px;
}
.app > svg {
    width: 24px;
    height: 24px;
}
.running::after {
    content: "";
    position: absolute;
    bottom: 5px;
    width: 10px;
    height: 3px;
    border-radius: 2px;
    background: #8a7d78;
}
.app.current {
    width: 36px;
    height: 38px;
    margin-left: 4px;
    border-radius: 4px;
    background: #f6efec;
}
.current.running::after {
    bottom: 0;
    width: 16px;
    background: #2f74ad;
}
.count, .profile {
    position: absolute;
    top: 10px;
    right: 4px;
    padding: 0 1px;
    border-radius: 4px;
    background: #dc3a44;
    color: #fff;
    font-size: 9px;
    line-height: 11px;
}
.profile {
    top: 7px;
    right: 5px;
    width: 16px;
    border-radius: 50%;
    background: var(--teal);
    line-height: 16px;
}
.current .profile {
    top: 1px;
    right: 1px;
}
.task-search {
    display: flex;
    align-items: center;
    gap: 10px;
    width: 218px;
    height: 31px;
    margin: 0 3px 0 4px;
    padding: 0 11px;
    border-radius: 16px;
    border-bottom: 1px solid #bcb2b0;
    background: #f4f1f1;
    color: #2c2726;
}
.task-search svg {
    width: 16px;
    height: 16px;
}
.task-search input {
    width: 100%;
    font-size: 13px;
}
.task-search input::placeholder {
    color: #6c6665;
}
.tray {
    display: flex;
    align-items: center;
    gap: 16px;
    margin-left: auto;
    fill: currentColor;
}
.tray svg {
    width: 16px;
    height: 16px;
}
.mic {
    color: #4a5a92;
}
.status {
    display: flex;
    gap: 9px;
}
.clock {
    text-align: right;
}
.tray .bell {
    margin-left: -8px;
    color: #14479c;
}
```
